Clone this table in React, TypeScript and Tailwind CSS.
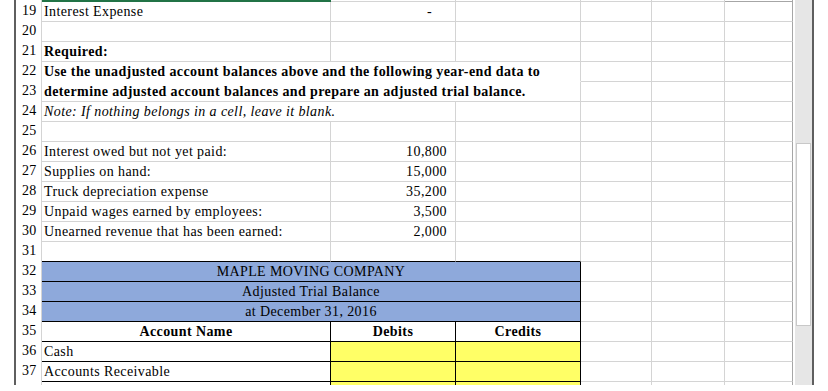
import React from "react";

type CellProps = {
  w: string;
  className?: string;
  children?: React.ReactNode;
};

const Cell: React.FC<CellProps> = ({ w, className = "", children }) => (
  <div
    className={`${w} h-[20px] shrink-0 border-r border-b border-[#d4d4d4] leading-[19px] whitespace-nowrap ${className}`}
  >
    {children}
  </div>
);

const Row: React.FC<{ n?: number; children: React.ReactNode }> = ({ n, children }) => (
  <div className="flex h-[20px]">
    <div className="w-[26px] h-[20px] shrink-0 border-r border-[#d4d4d4] pl-[6px] text-[14px] leading-[18px] tracking-[0.3px]">
      {n}
    </div>
    {children}
  </div>
);

// right block of the sheet, columns D, E, F
const Rest: React.FC = () => (
  <>
    <Cell w="w-[71px]" />
    <Cell w="w-[73px]" />
    <Cell w="w-[68px]" className="border-r-[#a6a6a6]" />
  </>
);

const Plain: React.FC<{ n: number; a?: string; b?: string; bCls?: string; aCls?: string }> = ({
  n,
  a,
  b,
  bCls = "",
  aCls = "",
}) => (
  <Row n={n}>
    <Cell w="w-[289px]" className={`pl-[2px] ${aCls}`}>
      {a}
    </Cell>
    <Cell w="w-[125px]" className={`text-right ${bCls}`}>
      {b}
    </Cell>
    <Cell w="w-[125px]" />
    <Rest />
  </Row>
);

const data = [
  ["Interest owed but not yet paid:", "10,800"],
  ["Supplies on hand:", "15,000"],
  ["Truck depreciation expense", "35,200"],
  ["Unpaid wages earned by employees:", "3,500"],
  ["Unearned revenue that has been earned:", "2,000"],
];

const blue = ["MAPLE MOVING COMPANY", "Adjusted Trial Balance", "at December 31, 2016"];

export default function App() {
  return (
    <div className="w-[828px] h-[391px] bg-white text-black font-['Liberation_Serif',serif] text-[14px] tracking-[0.4px] flex">
      <div className="w-[14px] shrink-0" />
      <div className="w-[2px] h-[385px] shrink-0 bg-[#5f5f5f]" />

      <div className="w-[777px] h-[385px] shrink-0 overflow-hidden flex flex-col">
        {/* top edge */}
        <div className="flex h-[2px]">
          <div className="w-[26px] h-[2px] shrink-0 border-r border-[#d4d4d4]" />
          <div className="w-[289px] h-[2px] shrink-0 bg-[#217346]" />
          <div className="w-[125px] h-[2px] shrink-0 border-r border-b border-[#d4d4d4]" />
          <div className="w-[125px] h-[2px] shrink-0 border-r border-b border-[#d4d4d4]" />
          <div className="w-[71px] h-[2px] shrink-0 border-r border-b border-[#d4d4d4]" />
          <div className="w-[73px] h-[2px] shrink-0 border-r border-b border-[#d4d4d4]" />
          <div className="w-[68px] h-[2px] shrink-0 border-r border-b border-[#d4d4d4] border-r-[#a6a6a6] border-b-[#a6a6a6]" />
        </div>

        <Plain n={19} a="Interest Expense" b="-" bCls="pr-[23px]" />
        <Plain n={20} />
        <Plain n={21} a="Required:" aCls="font-bold" />

        <Row n={22}>
          <Cell w="w-[539px]" className="pl-[2px] font-bold border-b-transparent">
            Use the unadjusted account balances above and the following year-end data to
          </Cell>
          <Rest />
        </Row>
        <Row n={23}>
          <Cell w="w-[539px]" className="pl-[2px] font-bold">
            determine adjusted account balances and prepare an adjusted trial balance.
          </Cell>
          <Rest />
        </Row>
        <Row n={24}>
          <Cell w="w-[414px]" className="pl-[2px] italic">
            Note: If nothing belongs in a cell, leave it blank.
          </Cell>
          <Cell w="w-[125px]" />
          <Rest />
        </Row>
        <Plain n={25} />

        {data.map(([label, value], i) => (
          <Plain key={label} n={26 + i} a={label} b={value} bCls="pr-[8px]" />
        ))}

        <Row n={31}>
          <Cell w="w-[289px]" className="border-b-black" />
          <Cell w="w-[125px]" className="border-b-black" />
          <Cell w="w-[125px]" className="border-b-black" />
          <Rest />
        </Row>

        {blue.map((t, i) => (
          <Row key={t} n={32 + i}>
            <Cell w="w-[539px]" className="bg-[#8ea9db] text-center border-r-black border-b-black">
              {t}
            </Cell>
            <Rest />
          </Row>
        ))}

        <Row n={35}>
          <Cell w="w-[289px]" className="text-center font-bold border-r-black border-b-black">
            Account Name
          </Cell>
          <Cell w="w-[125px]" className="text-center font-bold border-r-black border-b-black">
            Debits
          </Cell>
          <Cell w="w-[125px]" className="text-center font-bold border-r-black border-b-black">
            Credits
          </Cell>
          <Rest />
        </Row>

        {["Cash", "Accounts Receivable", ""].map((t, i) => (
          <Row key={i} n={i < 2 ? 36 + i : undefined}>
            <Cell w="w-[289px]" className="pl-[2px] border-r-black border-b-black">
              {t}
            </Cell>
            <Cell w="w-[125px]" className="bg-[#ffff66] border-r-black border-b-black" />
            <Cell w="w-[125px]" className="bg-[#ffff66] border-r-black border-b-black" />
            <Rest />
          </Row>
        ))}
      </div>

      <div className="w-[2px] shrink-0" />
      <div className="w-[17px] h-[385px] shrink-0 bg-[#e6e6e6] pt-[143px] px-[1px]">
        <div className="h-[183px] bg-white border border-[#c8c8c8]" />
      </div>
      <div className="w-[2px] h-[385px] shrink-0 bg-[#5f5f5f]" />
    </div>
  );
}
